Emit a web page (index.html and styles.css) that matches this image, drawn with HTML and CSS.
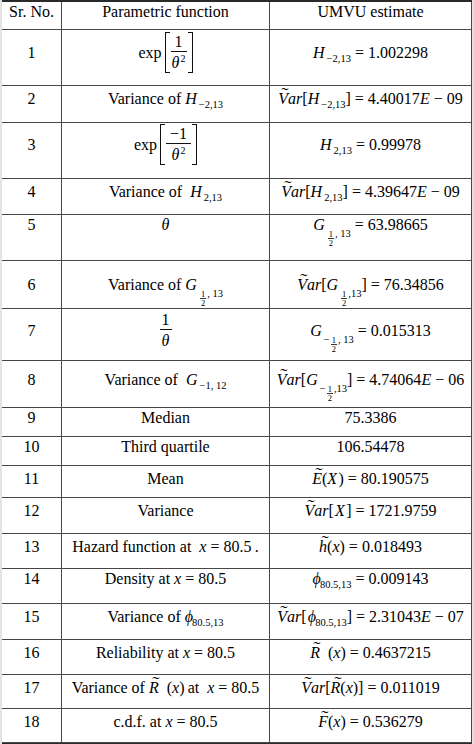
FILE: index.html
```html
<!DOCTYPE html>
<html>
<head>
<meta charset="utf-8">
<title>UMVU estimates</title>
<link rel="stylesheet" href="styles.css">
</head>
<body>
<table class="tbl">
<colgroup><col class="k1"><col class="k2"><col class="k3"></colgroup>
<tr class="h28"><td>Sr. No.</td><td>Parametric function</td><td>UMVU estimate</td></tr>
<tr class="h56 p2"><td>1</td><td>exp<span class="br l"></span><span class="fr"><span class="num wide">1</span><span class="den"><i>θ</i><span class="sp">2</span></span></span><span class="br r"></span></td><td><i>H</i><span class="sb">−2,13</span> = 1.002298</td></tr>
<tr class="h37"><td>2</td><td>Variance of <i>H</i><span class="sb">−2,13</span></td><td><i class="tl">V</i><i>ar</i>[<i>H</i><span class="sb">−2,13</span>] = 4.40017<i>E</i> − 09</td></tr>
<tr class="h56"><td>3</td><td>exp<span class="br l"></span><span class="fr"><span class="num wide">−1</span><span class="den"><i>θ</i><span class="sp">2</span></span></span><span class="br r"></span></td><td><i>H</i><span class="sb">2,13</span> = 0.99978</td></tr>
<tr class="h36"><td>4</td><td>Variance of&nbsp; <i>H</i><span class="sb">2,13</span></td><td><i class="tl">V</i><i>ar</i>[<i>H</i><span class="sb">2,13</span>] = 4.39647<i>E</i> − 09</td></tr>
<tr class="h46"><td>5</td><td><i>θ</i></td><td><i>G</i><span class="sb deep"><span class="sf"><span>1</span><span>2</span></span>, 13</span> = 63.98665</td></tr>
<tr class="h48 p12"><td>6</td><td>Variance of <i>G</i><span class="sb deep"><span class="sf"><span>1</span><span>2</span></span>, 13</span></td><td><i class="tl">V</i><i>ar</i>[<i>G</i><span class="sb deep"><span class="sf"><span>1</span><span>2</span></span>,13</span>] = 76.34856</td></tr>
<tr class="h52 p3"><td>7</td><td><span class="fr"><span class="num">1</span><span class="den"><i>θ</i></span></span></td><td><i>G</i><span class="sb deep">−<span class="sf"><span>1</span><span>2</span></span>, 13</span> = 0.015313</td></tr>
<tr class="h47 p7"><td>8</td><td>Variance of&nbsp; <i>G</i><span class="sb">−1, 12</span></td><td><i class="tl">V</i><i>ar</i>[<i>G</i><span class="sb deep">−<span class="sf"><span>1</span><span>2</span></span>,13</span>] = 4.74064<i>E</i> − 06</td></tr>
<tr class="h29"><td>9</td><td>Median</td><td>75.3386</td></tr>
<tr class="h29"><td>10</td><td>Third quartile</td><td>106.54478</td></tr>
<tr class="h32"><td>11</td><td>Mean</td><td><i class="tl">E</i>(<i>X</i>&#8202;) = 80.190575</td></tr>
<tr class="h36"><td>12</td><td>Variance</td><td><i class="tl">V</i><i>ar</i>[&#8202;<i>X</i>&#8202;] = 1721.9759</td></tr>
<tr class="h35"><td>13</td><td>Hazard function at&nbsp; <i>x</i> = 80.5&#8201;.</td><td><i class="tl">h</i>(<i>x</i>) = 0.018493</td></tr>
<tr class="h35"><td>14</td><td>Density at&nbsp;<i>x</i> = 80.5</td><td><i>ϕ</i><span class="sb tight">80.5,13</span> = 0.009143</td></tr>
<tr class="h36"><td>15</td><td>Variance of <i>ϕ</i><span class="sb tight">80.5,13</span></td><td><i class="tl">V</i><i>ar</i>[&#8202;<i>ϕ</i><span class="sb tight">80.5,13</span>] = 2.31043<i>E</i> − 07</td></tr>
<tr class="h35"><td>16</td><td>Reliability at&nbsp;<i>x</i> = 80.5</td><td><i class="tl">R</i>&nbsp; (<i>x</i>) = 0.4637215</td></tr>
<tr class="h34"><td>17</td><td>Variance of&nbsp;<i class="tl">R</i>&nbsp; (<i>x</i>)&#8201;at&nbsp; <i>x</i> = 80.5</td><td><i class="tl">V</i><i>ar</i>[<i class="tl">R</i>(<i>x</i>)] = 0.011019</td></tr>
<tr class="h34"><td>18</td><td>c.d.f. at&nbsp;<i>x</i> = 80.5</td><td><i class="tl">F</i>(<i>x</i>) = 0.536279</td></tr>
</table>
</body>
</html>
```
FILE: styles.css
```css
* { box-sizing: border-box; }
html, body { margin: 0; padding: 0; }
body {
  width: 474px;
  height: 744px;
  overflow: hidden;
  background: #e3e3e3;
  font-family: "Liberation Serif", "Times New Roman", "DejaVu Serif", serif;
  font-size: 16px;
  color: #000;
}
.tbl {
  margin-left: 2px;
  width: 470px;
  table-layout: fixed;
  border-collapse: separate;
  border-spacing: 0;
  background: #fff;
  border-top: 2px solid #2a2a2a;
  border-bottom: 1px solid #2a2a2a;
}
.k1 { width: 60px; }
.k2 { width: 208px; }
.k3 { width: 202px; }
.tbl td {
  border-right: 1px solid #474747;
  border-bottom: 1px solid #474747;
  padding: 1px 0 0;
  text-align: center;
  vertical-align: baseline;
  line-height: 18px;
  white-space: nowrap;
}
.h28 { height: 28px; }
.h29 { height: 29px; }
.h32 { height: 32px; }
.h34 { height: 34px; }
.h35 { height: 35px; }
.h36 { height: 36px; }
.h37 { height: 37px; }
.h46 { height: 46px; }
.h47 { height: 47px; }
.h48 { height: 48px; }
.h52 { height: 52px; }
.h56 { height: 56px; }
.tbl .p2 td { padding-top: 2px; }
.tbl .p3 td { padding-top: 3px; }
.tbl .p7 td { padding-top: 7px; }
.tbl .p12 td { padding-top: 12px; }

i { font-style: italic; }

/* subscripts and superscripts */
.sb {
  font-size: 10.5px;
  line-height: 0;
  vertical-align: -4px;
  margin-left: 2px;
}
.sb.tight { margin-left: -1px; }
.sb.deep { vertical-align: -7px; }
.sp {
  font-size: 10px;
  line-height: 0;
  vertical-align: 6px;
  margin-left: 1px;
}
.sf {
  display: inline-flex;
  flex-direction: column;
  align-items: center;
  font-size: 8.5px;
  line-height: 8px;
  margin: 0 1px;
}
.sf > span:first-child {
  border-bottom: 1px solid #333;
  padding: 0 1px;
}

/* fractions */
.fr {
  display: inline-flex;
  flex-direction: column;
  align-items: center;
  line-height: 16px;
  vertical-align: 11px;
}
.fr .num {
  border-bottom: 1px solid #111;
  padding: 0 2px 1px;
}
.fr .num.wide { padding: 0 4px 1px; }
.fr .den { padding-top: 3px; }

/* square brackets */
.br {
  display: inline-block;
  width: 5px;
  height: 41px;
  border: 1px solid #111;
  border-left-width: 1.4px;
  vertical-align: -15px;
}
.br.l { border-right: none; margin: 0 1px 0 3px; }
.br.r { border-left: none; border-right-width: 1.4px; margin-left: 1px; }

/* tilde accent */
.tl {
  display: inline-block;
  position: relative;
  padding-top: 2.5px;
}
.tl::after {
  content: "\02DC";
  position: absolute;
  top: -3px;
  left: 0;
  width: 100%;
  text-align: center;
  font-style: normal;
  font-size: 0.9em;
  line-height: 18px;
  transform: translateX(2px) scaleX(1.5);
}
```
